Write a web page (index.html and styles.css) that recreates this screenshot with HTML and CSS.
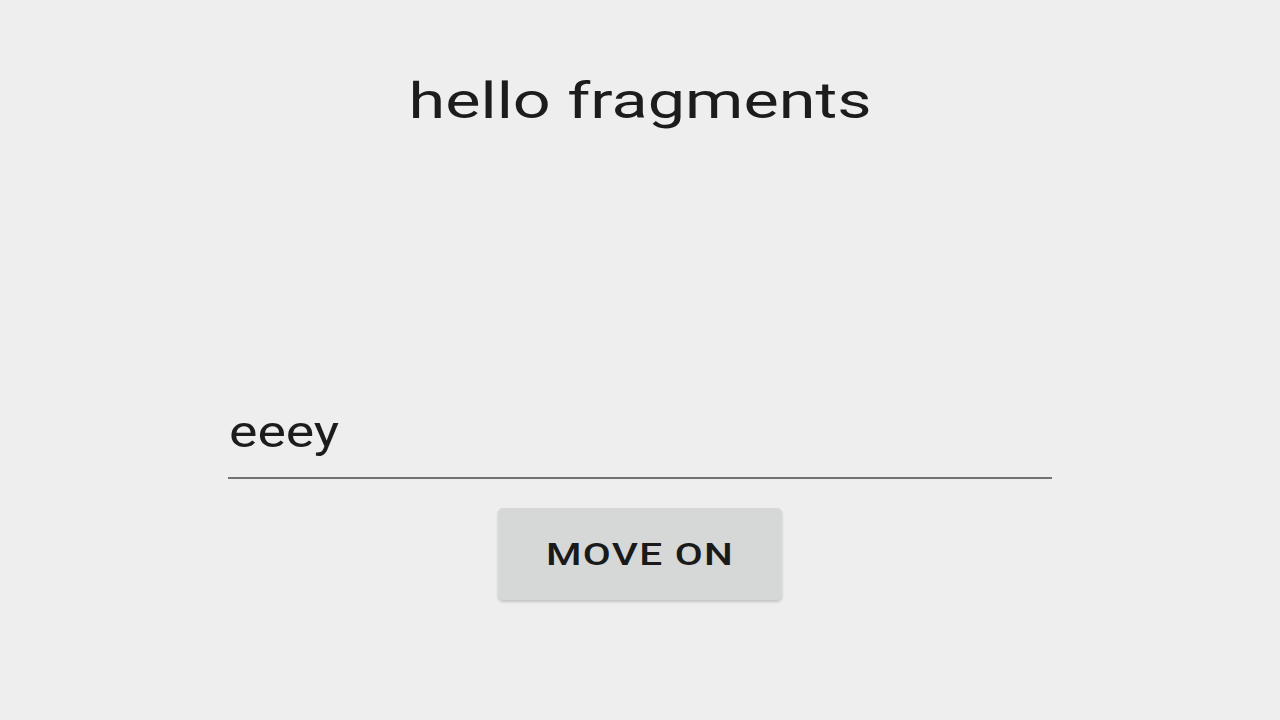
FILE: index.html
```html
<!DOCTYPE html>
<html>
<head>
<meta charset="utf-8">
<link rel="stylesheet" href="styles.css">
</head>
<body>
<main class="screen">
  <h1 class="title"><span class="stretch title-text">hello fragments</span></h1>
  <div class="spacer"></div>
  <div class="field">
    <span class="field-text stretch">eeey</span>
  </div>
  <button class="btn"><span class="stretch btn-text">MOVE ON</span></button>
</main>
</body>
</html>
```
FILE: styles.css
```css
html, body {
  margin: 0;
  padding: 0;
  background: #eeeeee;
}
.screen {
  width: 1280px;
  height: 720px;
  display: flex;
  flex-direction: column;
  align-items: center;
  font-family: Roboto, "Liberation Sans", sans-serif;
  color: #1c1c1c;
}
.stretch {
  display: inline-block;
}
.title {
  margin: 69px 0 0 0;
  font-size: 50px;
  font-weight: 400;
  line-height: 64px;
}
.title-text {
  transform: scaleX(1.33);
}
.spacer {
  height: 269px;
}
.field {
  width: 824px;
  height: 77px;
  border-bottom: 2px solid #727272;
  box-sizing: border-box;
  display: flex;
  align-items: flex-end;
  padding-bottom: 20px;
}
.field-text {
  font-size: 45px;
  line-height: 50px;
  transform: scaleX(1.19);
  transform-origin: left center;
  margin-left: 1px;
}
.btn {
  margin-top: 29px;
  width: 284px;
  height: 92px;
  border: none;
  border-radius: 5px;
  background: #d6d7d7;
  box-shadow: 0 2px 3px rgba(0,0,0,0.18);
  font-family: Roboto, "Liberation Sans", sans-serif;
  font-size: 32px;
  font-weight: 500;
  color: #1a1a1a;
  letter-spacing: 1px;
  padding: 0;
}
.btn-text {
  transform: scaleX(1.27);
}
```
